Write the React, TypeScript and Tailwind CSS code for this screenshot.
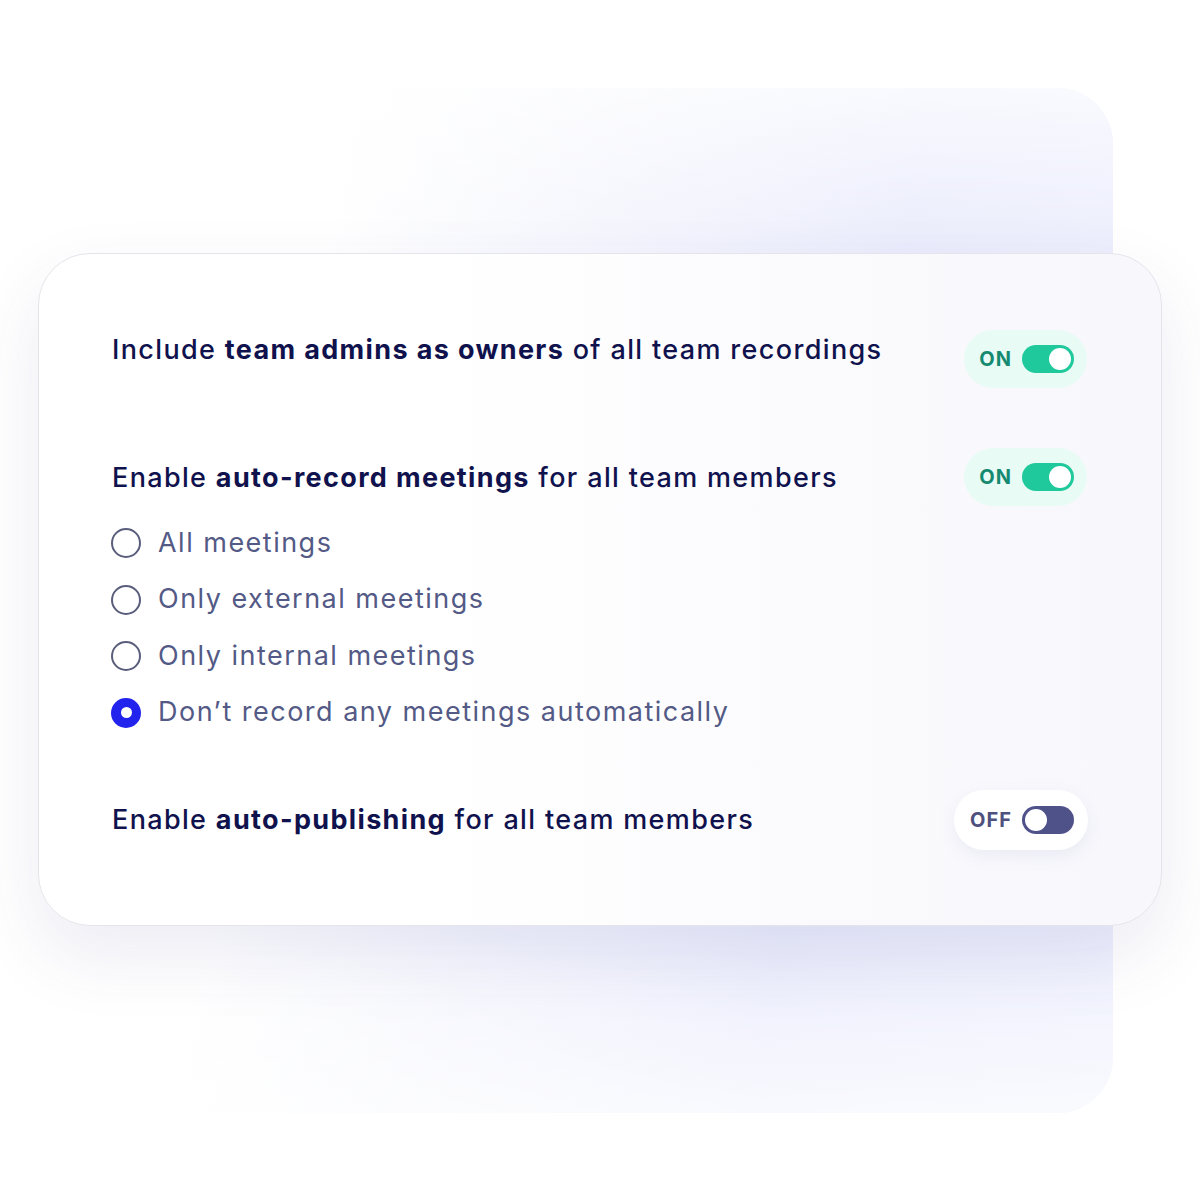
import React from 'react';

const Toggle = ({ on }: { on: boolean }) => {
  if (on) {
    return (
      <div className="flex items-center gap-[10px] h-[58px] pl-[15px] pr-[13px] rounded-full bg-[#e9fbf5]">
        <span className="text-[20px] font-bold tracking-[0.05em] text-[#168a70]">ON</span>
        <div className="w-[52px] h-[28px] rounded-full bg-[#1fc99b] flex items-center justify-end pr-[3px]">
          <div className="w-[22px] h-[22px] rounded-full bg-white" />
        </div>
      </div>
    );
  }
  return (
    <div className="flex items-center gap-[10px] h-[60px] pl-[16px] pr-[14px] rounded-full bg-white shadow-[0_6px_18px_rgba(70,70,140,0.08)]">
      <span className="text-[20px] font-bold tracking-[0.05em] text-[#4e507e]">OFF</span>
      <div className="w-[52px] h-[28px] rounded-full bg-[#4f5189] flex items-center justify-start pl-[3px]">
        <div className="w-[22px] h-[22px] rounded-full bg-white" />
      </div>
    </div>
  );
};

const Radio = ({ label, checked }: { label: string; checked?: boolean }) => (
  <div className="flex items-center gap-[17px] h-[30px]">
    {checked ? (
      <div className="w-[30px] h-[30px] rounded-full bg-[#2323ee] flex items-center justify-center">
        <div className="w-[11px] h-[11px] rounded-full bg-white" />
      </div>
    ) : (
      <div className="w-[30px] h-[30px] rounded-full border-2 border-[#5a5e7c]" />
    )}
    <span className="text-[27px] text-[#545a86] tracking-[0.055em]">{label}</span>
  </div>
);

export default function App() {
  return (
    <div
      className="relative w-[1200px] h-[1201px] bg-white overflow-hidden"
      style={{ fontFamily: 'Inter, "Noto Sans", sans-serif' }}
    >
      {/* decorative backdrop */}
      <div className="absolute left-[88px] top-[88px] w-[1025px] h-[1025px] rounded-[56px] bg-[linear-gradient(100deg,rgba(255,255,255,0)_22%,#f4f5fd_45%,#eaecfc_70%,#eef0fd_100%)]" />
      <div className="absolute left-[88px] top-[88px] w-[1025px] h-[1025px] rounded-[56px] bg-[linear-gradient(to_bottom,rgba(255,255,255,0.7),rgba(255,255,255,0)_16%,rgba(255,255,255,0)_82%,rgba(255,255,255,0.7))]" />

      <div className="relative pt-[253px] px-[38px]">
        <div className="rounded-[52px] border border-[#e4e4ea] bg-[linear-gradient(to_right,#ffffff_35%,#f7f7fc)] shadow-[0_30px_70px_rgba(70,70,150,0.10)] pt-[76px] pb-[75px] pl-[73px] pr-[74px]">
          <div className="flex justify-between items-start">
            <p className="text-[27px] leading-[39px] font-medium text-[#10124d] tracking-[0.05em]">
              Include <b className="font-bold">team admins as owners</b> of all team recordings
            </p>
            <Toggle on />
          </div>

          <div className="flex justify-between items-center mt-[60px]">
            <p className="text-[27px] leading-[39px] font-medium text-[#10124d] tracking-[0.05em]">
              Enable <b className="font-bold">auto-record meetings</b> for all team members
            </p>
            <Toggle on />
          </div>

          <div className="flex flex-col gap-[26.5px] mt-[22px] -ml-[1px]">
            <Radio label="All meetings" />
            <Radio label="Only external meetings" />
            <Radio label="Only internal meetings" />
            <Radio label="Don’t record any meetings automatically" checked />
          </div>

          <div className="flex justify-between items-center mt-[62px]">
            <p className="text-[27px] leading-[39px] font-medium text-[#10124d] tracking-[0.05em]">
              Enable <b className="font-bold">auto-publishing</b> for all team members
            </p>
            <div className="-mr-[1px]">
              <Toggle on={false} />
            </div>
          </div>
        </div>
      </div>
    </div>
  );
}
